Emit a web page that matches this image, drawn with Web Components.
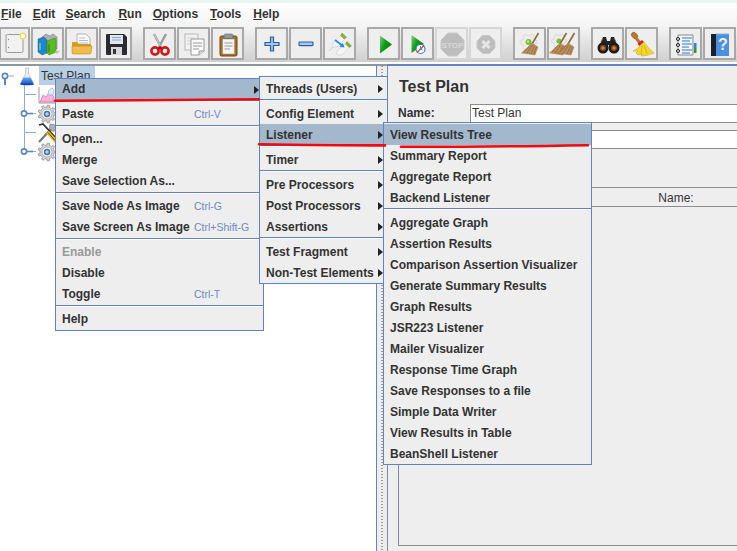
<!DOCTYPE html>
<html><head><meta charset="utf-8"><title>Test Plan</title>
<style>
html,body{margin:0;padding:0;width:737px;height:551px;overflow:hidden;background:#eee;font:bold 12px "Liberation Sans",Arial,sans-serif;color:#333}
body{display:flex;flex-direction:column;position:relative}
</style></head><body>
<jm-menubar>
 <jm-mb><u>F</u>ile</jm-mb><jm-mb><u>E</u>dit</jm-mb><jm-mb style="margin-left:-1px"><u>S</u>earch</jm-mb><jm-mb style="margin-left:2px"><u>R</u>un</jm-mb><jm-mb><u>O</u>ptions</jm-mb><jm-mb style="margin-left:1px"><u>T</u>ools</jm-mb><jm-mb style="margin-left:1px"><u>H</u>elp</jm-mb>
</jm-menubar>
<jm-toolbar>
 <jm-tgroup><jm-tool icon="new" style="width:30px;border-left-width:1px"></jm-tool><jm-tool icon="templates"></jm-tool><jm-tool icon="open"></jm-tool><jm-tool icon="save"></jm-tool></jm-tgroup>
 <jm-tgroup><jm-tool icon="cut"></jm-tool><jm-tool icon="copy"></jm-tool><jm-tool icon="paste"></jm-tool></jm-tgroup>
 <jm-tgroup><jm-tool icon="plus"></jm-tool><jm-tool icon="minus"></jm-tool><jm-tool icon="toggle"></jm-tool></jm-tgroup>
 <jm-tgroup><jm-tool icon="play"></jm-tool><jm-tool icon="playnt"></jm-tool><jm-tool icon="stop" disabled></jm-tool><jm-tool icon="shutdown" disabled></jm-tool></jm-tgroup>
 <jm-tgroup><jm-tool icon="clear"></jm-tool><jm-tool icon="clearall"></jm-tool></jm-tgroup>
 <jm-tgroup><jm-tool icon="binoculars"></jm-tool><jm-tool icon="broom"></jm-tool></jm-tgroup>
 <jm-tgroup><jm-tool icon="list"></jm-tool><jm-tool icon="help"></jm-tool></jm-tgroup>
</jm-toolbar>
<jm-main>
 <jm-tree slot="tree">
  <jm-node kind="root" icon="flask" selected>Test Plan</jm-node>
  <jm-node kind="leaf" icon="chart"></jm-node>
  <jm-node kind="branch" icon="gear"></jm-node>
  <jm-node kind="leaf" icon="tools"></jm-node>
  <jm-node kind="last" icon="gear"></jm-node>
 </jm-tree>
 <jm-panel slot="panel"></jm-panel>
</jm-main>

<jm-menu style="left:55px;top:78px;width:207px;z-index:1;--nudge:-2px;--col:132px">
 <jm-item active arrow>Add</jm-item><jm-sep></jm-sep>
 <jm-item key="Ctrl-V">Paste</jm-item><jm-sep></jm-sep>
 <jm-item>Open...</jm-item><jm-item>Merge</jm-item><jm-item>Save Selection As...</jm-item><jm-sep></jm-sep>
 <jm-item key="Ctrl-G">Save Node As Image</jm-item><jm-item key="Ctrl+Shift-G">Save Screen As Image</jm-item><jm-sep></jm-sep>
 <jm-item disabled>Enable</jm-item><jm-item>Disable</jm-item><jm-item key="Ctrl-T">Toggle</jm-item><jm-sep></jm-sep>
 <jm-item>Help</jm-item>
</jm-menu>
<jm-menu style="left:259px;top:76px;width:127px;z-index:2;padding-top:1px">
 <jm-item arrow>Threads (Users)</jm-item><jm-sep></jm-sep>
 <jm-item arrow>Config Element</jm-item><jm-item active arrow>Listener</jm-item><jm-sep></jm-sep>
 <jm-item arrow>Timer</jm-item><jm-sep></jm-sep>
 <jm-item arrow>Pre Processors</jm-item><jm-item arrow>Post Processors</jm-item><jm-item arrow>Assertions</jm-item><jm-sep></jm-sep>
 <jm-item arrow>Test Fragment</jm-item><jm-item arrow>Non-Test Elements</jm-item>
</jm-menu>
<jm-menu style="left:383px;top:122px;width:207px;z-index:3;padding-top:1px">
 <jm-item active>View Results Tree</jm-item><jm-item>Summary Report</jm-item><jm-item>Aggregate Report</jm-item><jm-item>Backend Listener</jm-item><jm-sep></jm-sep>
 <jm-item>Aggregate Graph</jm-item><jm-item>Assertion Results</jm-item><jm-item>Comparison Assertion Visualizer</jm-item><jm-item>Generate Summary Results</jm-item><jm-item>Graph Results</jm-item><jm-item>JSR223 Listener</jm-item><jm-item>Mailer Visualizer</jm-item><jm-item>Response Time Graph</jm-item><jm-item>Save Responses to a file</jm-item><jm-item>Simple Data Writer</jm-item><jm-item>View Results in Table</jm-item><jm-item>BeanShell Listener</jm-item>
</jm-menu>
<jm-marks></jm-marks>

<script>
const gearPath=(cx,cy,r,n=8)=>{let d='';for(let i=0;i<n;i++){const a=i/n*Math.PI*2,b=a+Math.PI/n*.5,c=a-Math.PI/n*.5;
 const P=(an,ra)=>(cx+Math.cos(an)*ra).toFixed(1)+' '+(cy+Math.sin(an)*ra).toFixed(1);
 d+=(i?'L':'M')+P(c,r*.78)+'L'+P(c+.05,r)+'L'+P(b-.05,r)+'L'+P(b,r*.78)+'L'+P(a+Math.PI/n,r*.78);}return d+'Z';};
const sweep=x=>`<g transform="translate(${x} 0)"><path d="M20.5 1L14 12" stroke="#8d6a3f" stroke-width="1.6"/><path d="M14 11L20 15 17 23 3.5 21 9 16Z" fill="#bb8d5c" stroke="#9a6f42" stroke-width=".4"/><path d="M14.5 13L9 21M16.5 14L13 22M12.5 13L6 20M18.5 15L16 22" stroke="#8c6439" stroke-width=".7"/></g>`;
const I={
new:`<rect x="3" y="2.5" width="17" height="18" rx="1.5" fill="#f1f1f1" stroke="#9a9a9a"/><circle cx="5.5" cy="7.5" r=".7" fill="#888"/><circle cx="5.5" cy="15.5" r=".7" fill="#888"/><circle cx="20" cy="4" r="3.6" fill="#fff3a0"/><circle cx="20" cy="4" r="2" fill="#fff"/><circle cx="20" cy="4" r="3" fill="none" stroke="#e9cd52"/>`,
templates:`<path d="M6 5L10 2 14 4 17 2 21 5V17H6Z" fill="#a9b1b6" stroke="#77808a" stroke-width=".6"/><path d="M2 7L8 5 11 8V21L6 23 2 20Z" fill="#1f86c9" stroke="#175f92" stroke-width=".5"/><path d="M11 9L19 6 20 8V20L13 23 11 21Z" fill="#5cbb1d" stroke="#37860c" stroke-width=".5"/><path d="M19 19L24 19 20 22Z" fill="#bbb"/><path d="M4 11V18" stroke="#a3d7f3"/><path d="M13 12V20" stroke="#2f7d08"/>`,
open:`<path d="M7 2H16L20 6V14H7Z" fill="#f8f8f8" stroke="#9a9a9a" stroke-width=".7"/><path d="M9 6H15M9 8.5H18M9 11H18" stroke="#9fb0c4" stroke-width=".8"/><path d="M2 10H7L9 12H21V20Q21 22 19 22H4Q2 22 2 20Z" fill="#d99a26"/><path d="M2 14H22L21 21Q21 22 19 22H4Q2 22 2 20Z" fill="#f0bd4a" stroke="#b57a12" stroke-width=".5"/>`,
save:`<path d="M2 3Q2 2 3 2H20L23 5V22Q23 23 22 23H3Q2 23 2 22Z" fill="#2c2c30"/><rect x="6" y="3" width="13" height="9" fill="#dfe8f2"/><path d="M8 5.5H17M8 8H17" stroke="#8ea6c2"/><rect x="7" y="15" width="11" height="8" fill="#d8d8d8"/><rect x="9" y="17" width="3" height="5" fill="#333"/>`,
cut:`<path d="M6 2L13 15M18 2L11 15" stroke="#9c9c9c" stroke-width="2.4"/><path d="M6 2L12.5 14" stroke="#d9d9d9" stroke-width=".8"/><circle cx="7" cy="19" r="3.6" fill="none" stroke="#cf1a20" stroke-width="2.6"/><circle cx="17" cy="19" r="3.6" fill="none" stroke="#cf1a20" stroke-width="2.6"/><path d="M9 16L12 14 15 16 12 18Z" fill="#b11015"/>`,
copy:`<rect x="3" y="2" width="13" height="16" fill="#f2f2f2" stroke="#b8b8b8"/><path d="M5 6H13M5 9H13M5 12H13" stroke="#d0d0d0"/><path d="M9 7H22V19L17 23H9Z" fill="#fafafa" stroke="#9a9a9a"/><path d="M11 11H20M11 14H20M11 17H17" stroke="#999"/><path d="M17 23V19H22" fill="#ddd" stroke="#999"/>`,
paste:`<rect x="4" y="4" width="17" height="20" rx="1.5" fill="#a8701c" stroke="#74480c"/><rect x="6.5" y="7" width="12" height="15" fill="#f5f5f5" stroke="#888" stroke-width=".5"/><path d="M8.5 11H16.5M8.5 14H16.5M8.5 17H14" stroke="#999"/><rect x="8" y="2" width="9" height="4.5" rx="1.5" fill="#8f979d" stroke="#5d6469" stroke-width=".6"/>`,
plus:`<path d="M10.5 5H13.5V10.5H19V13.5H13.5V19H10.5V13.5H5V10.5H10.5Z" fill="#a6c7ee" stroke="#2a619e" stroke-width="1.2"/>`,
minus:`<rect x="5" y="10" width="14" height="3.6" rx=".8" fill="#a6c7ee" stroke="#2a619e" stroke-width="1.2"/>`,
toggle:`<path d="M15 1.5L19 5 9 15H5V11Z" fill="#f4f4f4" stroke="#ccc" stroke-width=".6"/><path d="M14 1L18.5 5.5 16 7 12.5 3.5Z" fill="#83b33e" stroke="#5f8c24" stroke-width=".4"/><path d="M5 15L1 19" stroke="#ccc"/><path d="M23 10L27 13.5 18 23H13V19Z" transform="translate(-4 0)" fill="#f4f4f4" stroke="#ccc" stroke-width=".6"/><path d="M19 9.5L23.5 14 21 15.5 17.5 12Z" fill="#83b33e" stroke="#5f8c24" stroke-width=".4"/><path d="M7 8L15 14" stroke="#2a85e6" stroke-width="1.6"/><path d="M16.5 15.5L11.5 14.8 14.8 11Z" fill="#2a85e6"/>`,
play:`<defs><linearGradient id="g" x1="0" y1="0" x2="1" y2=".6"><stop offset="0" stop-color="#7ed07a"/><stop offset=".5" stop-color="#0b9e18"/><stop offset="1" stop-color="#0a7a12"/></linearGradient></defs><path d="M8 3.5L20 12.5 8 21.5Z" fill="url(#g)"/>`,
playnt:`<defs><linearGradient id="g" x1="0" y1="0" x2="1" y2=".6"><stop offset="0" stop-color="#7ed07a"/><stop offset=".5" stop-color="#0b9e18"/><stop offset="1" stop-color="#0a7a12"/></linearGradient></defs><path d="M5.5 3L18 12 5.5 21Z" fill="url(#g)"/><circle cx="14.5" cy="17" r="4.5" fill="#fff" stroke="#2b7fd6" stroke-width="1.2"/><path d="M11 20.5L18 13.5" stroke="#e03a3a" stroke-width="1.2"/><path d="M14.5 14V17L16.5 18" stroke="#2b7fd6" stroke-width=".8" fill="none"/>`,
stop:`<path d="M8 1H17L24 8V17L17 24H8L1 17V8Z" fill="#bdbdbd" stroke="#c9c9c9"/><text x="12.5" y="15.5" text-anchor="middle" font-family="Liberation Sans" font-weight="bold" font-size="8" fill="#d9d9d9">STOP</text>`,
shutdown:`<path d="M8.5 3.5H15.5L21 9V16L15.5 21.5H8.5L3 16V9Z" fill="#bdbdbd" stroke="#c9c9c9"/><path d="M8.5 9L15.5 16M15.5 9L8.5 16" stroke="#e6e6e6" stroke-width="3"/>`,
clear:`<path d="${gearPath(10.5,10,8.5,6)}" fill="#ececea" stroke="#cfcfca" stroke-width=".6"/><circle cx="10.5" cy="10" r="3" fill="#79c13a"/><circle cx="10" cy="9.5" r="1.2" fill="#bde68f"/>${sweep(0)}`,
clearall:`<path d="${gearPath(7,9,7.5,6)}" fill="#ececea" stroke="#cfcfca" stroke-width=".6"/><circle cx="7" cy="9" r="2.6" fill="#79c13a"/>${sweep(-6)}${sweep(2)}`,
binoculars:`<path d="M7 5H10L11 9H14L15 5H18L22 15H14L13 13H12L11 15H3Z" fill="#222"/><circle cx="7" cy="16" r="5.5" fill="#1c1c1c"/><circle cx="18" cy="16" r="5.5" fill="#1c1c1c"/><circle cx="7" cy="16" r="3" fill="#8a4a1e"/><circle cx="18" cy="16" r="3" fill="#8a4a1e"/><circle cx="7" cy="16" r="1.5" fill="#d88a3c"/><circle cx="18" cy="16" r="1.5" fill="#d88a3c"/><path d="M7 6L5 10M18 6L20 10" stroke="#777"/>`,
broom:`<rect x="1" y="1" width="7" height="5" rx="2.5" transform="rotate(45 4.5 3.5)" fill="#b9772b" stroke="#7d4c13" stroke-width=".5"/><path d="M6 6L10 11" stroke="#b9772b" stroke-width="3"/><path d="M7.5 12L12 8 14 10 9.5 14Z" fill="#d81f26"/><path d="M9.5 14L14 10C17 14 20 18 24 21 19 23 15 24 11 24L12 22 8 23 6 21 8 19 3 19C6 18 8 16 9.5 14Z" fill="#f3d52e" stroke="#c4a20e" stroke-width=".5"/><path d="M12 13L11 23M14 13L17 22" stroke="#c9aa14" stroke-width=".7"/>`,
list:`<path d="M4 3H19V23H4Z" fill="#f7f7f7" stroke="#888"/><g fill="none" stroke="#333" stroke-width="1"><circle cx="4" cy="7" r="1.6"/><circle cx="4" cy="13" r="1.6"/><circle cx="4" cy="19" r="1.6"/></g><path d="M8 6H18M8 9H16M8 12H18M8 15H15M8 18H18M8 21H16" stroke="#2277dd" stroke-width="1.2"/><rect x="20" y="11" width="2.5" height="5" fill="#2b80d8"/><rect x="20" y="16" width="2.5" height="5" fill="#2a9a3a"/>`,
help:`<path d="M3 2H21V24H3Z" fill="#4c8fdc"/><rect x="3" y="2" width="5" height="22" fill="#17202c"/><path d="M8 2H21" stroke="#7fb0e8"/><text x="15" y="18" text-anchor="middle" font-family="Liberation Sans" font-size="16" fill="#e8f1fb">?</text>`,
flask:`<defs><linearGradient id="f" x1="0" y1="0" x2="0" y2="1"><stop offset="0" stop-color="#6aa6ee"/><stop offset="1" stop-color="#1650c4"/></linearGradient></defs><path d="M5.5 1H8.5V7L14 17H0L5.5 7Z" fill="#eceef2" stroke="#b4bac2" stroke-width=".7"/><path d="M3.5 10.5H10.5L14 17.5H0Z" fill="url(#f)"/><ellipse cx="7" cy="17.3" rx="6.6" ry=".9" fill="#1a43a0"/>`,
chart:`<path d="M1 1V17H17" stroke="#9a9a9a" fill="none"/><path d="M2 16L5 9 8 11 12 5 16 11V16Z" fill="#f7b4d8" stroke="#d955a5" stroke-width=".6"/><path d="M10 9Q10 3 14 2 17 4 15 9Z" fill="#dcecf8" stroke="#88a9c7" stroke-width=".6"/>`,
gear:`<path d="${gearPath(9,9,9,9)}" fill="#d2d2d2" stroke="#858585" stroke-width=".7"/><circle cx="9" cy="9" r="5" fill="#f4f4f4" stroke="#9a9a9a" stroke-width=".6"/><circle cx="9" cy="9" r="3.2" fill="#3f70ad"/><circle cx="9" cy="9" r="1.8" fill="#b5d0ec"/>`,
tools:`<path d="M1 18L15 3" stroke="#777" stroke-width="2.2"/><path d="M12 0L18 1 15.5 4.5 18.5 6 15 7.5 11.5 5Z" fill="#b2b2b2" stroke="#555" stroke-width=".5"/><path d="M1 1L5 0 17 13" stroke="#333" stroke-width="1.8" fill="none"/><path d="M9.5 8L18 17.5" stroke="#e9b71a" stroke-width="3.6"/><path d="M10 8.5L17 16.5" stroke="#222" stroke-width=".7"/>`
};
const def=(n,html)=>customElements.define(n,class extends HTMLElement{
 constructor(){super();this.attachShadow({mode:'open'}).innerHTML=typeof html==='function'?'':html;}
 connectedCallback(){if(typeof html==='function')this.shadowRoot.innerHTML=html(this);}
});
def('jm-icon',e=>`<style>:host{display:inline-flex;flex:none}svg{display:block;overflow:visible}</style><svg width="${e.getAttribute('size')||24}" height="${e.getAttribute('size')||24}" viewBox="0 0 ${e.getAttribute('box')||24} ${e.getAttribute('box')||24}" fill="none">${I[e.getAttribute('name')]}</svg>`);
def('jm-menubar',`<style>:host{display:flex;flex:none;height:24px;border-top:3px solid #e8f6ef;padding-left:1px;gap:11px;align-items:center;background:linear-gradient(#fff,#f3f3f3);color:#333;font:bold 12px "Liberation Sans",sans-serif}</style><slot></slot>`);
def('jm-mb',`<style>:host{display:block;padding-bottom:2px}</style><slot></slot>`);
def('jm-toolbar',`<style>:host{display:flex;flex:none;height:35px;align-items:flex-start;gap:11px;background:linear-gradient(#f3f3f3,#cfcfcf)}</style><slot></slot>`);
def('jm-tgroup',`<style>:host{display:flex;gap:1px;height:33px}</style><slot></slot>`);
def('jm-tool',e=>{const d=e.hasAttribute('disabled');return `<style>:host{display:flex;box-sizing:border-box;width:33px;height:33px;border:2px solid ${d?'#d6d6d6':'#a8a8a8'};background:#eeeeee;align-items:center;justify-content:center}</style><jm-icon name="${e.getAttribute('icon')}"></jm-icon>`});
def('jm-main',`<style>:host{display:flex;flex:1;min-height:0;border-top:2px solid #fff;position:relative}
.tree{width:377px;flex:none;background:#fff;border-top:2px solid #8b97a3;border-right:1px solid #6382bf;box-sizing:border-box}
.split{width:10px;flex:none;background:#eee;border-top:2px solid #8b97a3;box-sizing:border-box;display:flex;justify-content:center}
.split i{display:block;width:2px;background:repeating-linear-gradient(#9a9a9a 0 1px,transparent 1px 3px)}
.panel{flex:1;min-width:0;border-top:2px solid #6382bf;border-left:1px solid #7d8ba5;background:#eee}
</style><div class="tree"><slot name="tree"></slot></div><div class="split"><i></i></div><div class="panel"><slot name="panel"></slot></div>`);
def('jm-tree',`<style>:host{display:flex;flex-direction:column}</style><slot></slot>`);
def('jm-node',e=>{const k=e.getAttribute('kind'),c='#5b85bf';
 const root=k==='root';
 const gut=root?`<svg width="20" height="19" viewBox="0 0 20 19"><path d="M5 13V19" stroke="${c}" stroke-width="2"/><circle cx="5" cy="10" r="2.6" fill="#fff" stroke="${c}" stroke-width="1.6"/><path d="M8 10H14" stroke="#8cacd6"/></svg>`:
 `<svg width="38" height="19" viewBox="0 0 38 19"><path d="M24.5 0V${k==='last'?10:19}" stroke="#8cacd6"/><path d="M24.5 9.5H36" stroke="#8cacd6"/>${k==='branch'||k==='last'?`<circle cx="24" cy="9.5" r="2.6" fill="#fff" stroke="${c}" stroke-width="1.6"/><path d="M27 9.5H33" stroke="${c}" stroke-width="1.6"/>`:''}</svg>`;
 return `<style>:host{display:flex;height:19px;align-items:center;font:12px "Liberation Sans",sans-serif;color:#333}svg{display:block;flex:none}
 .l{background:#b8cfe5;height:19px;line-height:20px;padding:0 0 0 2px;width:54px;margin-left:1px}</style>${gut}<jm-icon name="${e.getAttribute('icon')}" size="18" box="18"></jm-icon>${root?'<span class="l"><slot></slot></span>':''}`});
def('jm-panel',`<style>:host{display:flex;flex-direction:column;height:100%;padding:11px 0 0 10px;box-sizing:border-box;font:bold 12px "Liberation Sans",sans-serif;color:#333;overflow:hidden}
h1{margin:0 0 7px 1px;font:bold 16px/20px "Liberation Sans",sans-serif}
.f{display:grid;grid-template-columns:72px 300px;align-items:center}
.f label{line-height:19px}
.i{box-sizing:border-box;height:19px;background:#fff;border:1px solid #8d8d8d;font:12px/17px "Liberation Sans",sans-serif;padding-left:1px}
.f.c{margin-top:7px}
.box{margin-top:38px;flex:1;margin-bottom:5px;border-left:1px solid #7d8ba5;border-bottom:1px solid #8d8d8d;width:400px}
.h{display:grid;grid-template-columns:554px 60px;height:20px;line-height:20px;border-top:1px solid #8d8d8d;border-bottom:1px solid #8d8d8d;text-align:center;width:620px;font-weight:normal;font-size:12px;box-sizing:border-box}
</style><h1>Test Plan</h1><div class="f"><label>Name:</label><div class="i">Test Plan</div></div><div class="f c"><label></label><div class="i"></div></div><div class="box"><div class="h"><span>Name:</span><span></span></div></div>`);
def('jm-menu',`<style>:host{display:flex;flex-direction:column;position:absolute;background:#eee;border:1px solid #6382bf;font:bold 12px "Liberation Sans",sans-serif;color:#333}</style><slot></slot>`);
def('jm-item',e=>{const a=e.hasAttribute('active'),d=e.hasAttribute('disabled'),k=e.getAttribute('key'),ar=e.hasAttribute('arrow');
 return `<style>:host{display:flex;align-items:center;height:21px;padding:0 4px 0 6px;background:${a?'#a3b8cc':'transparent'};color:${d?'#999':'#333'};white-space:nowrap}
 .t{width:var(--col,auto);margin-top:var(--nudge,0)}
 .k{font:10.5px "Liberation Sans",sans-serif;color:#7089c4;margin-top:var(--nudge,0)}
 .a{width:0;height:0;margin-left:auto;border-left:5px solid #222;border-top:4px solid transparent;border-bottom:4px solid transparent}</style><span class="t"><slot></slot></span>${k?`<span class="k">${k}</span>`:''}${ar?'<span class="a"></span>':''}`});
def('jm-sep',`<style>:host{display:block;height:4px;box-sizing:border-box;border-top:1px solid #6382bf;background:linear-gradient(#fff 1px,transparent 1px)}</style>`);
def('jm-marks',`<style>:host{position:absolute;left:0;top:0;z-index:5;pointer-events:none}svg{display:block}</style><svg width="737" height="551" fill="none" stroke="#f00a12" stroke-width="2.6" stroke-linecap="round"><path d="M55 100.7C120 100.6 200 99.6 259 99.2"/><path d="M259 144.3C300 145 350 145.5 385 145.4"/><path d="M401 146.8C470 147 540 146 588 145.2"/></svg>`);
</script>
</body></html>
